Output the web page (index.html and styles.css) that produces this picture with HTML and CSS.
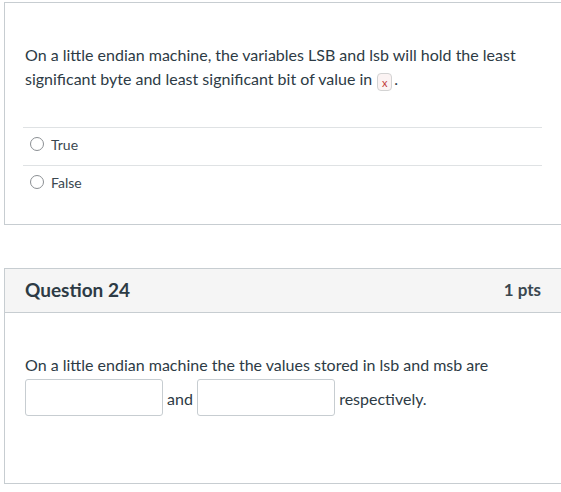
FILE: index.html
```html
<!DOCTYPE html>
<html>
<head>
<meta charset="utf-8">
<link rel="stylesheet" href="styles.css">
</head>
<body>
<div class="card card-first">
  <div class="qbody">
    <p class="qtext">On a little endian machine, the variables LSB and lsb will hold the least significant byte and least significant bit of value in <span class="xbadge">x</span>.</p>
    <div class="answers">
      <label class="answer"><span class="radio"></span><span class="alabel">True</span></label>
      <label class="answer"><span class="radio"></span><span class="alabel">False</span></label>
    </div>
  </div>
</div>
<div class="card card-second">
  <div class="qheader">
    <span class="qtitle">Question 24</span>
    <span class="qpts">1 pts</span>
  </div>
  <div class="qbody qbody-fill">
    <p class="qtext">On a little endian machine the the values stored in lsb and msb are <span class="blank"></span> and <span class="blank"></span> respectively.</p>
  </div>
</div>
</body>
</html>
```
FILE: styles.css
```css
html, body {
  margin: 0;
  padding: 0;
  background: #ffffff;
}
body {
  font-family: Lato, "Open Sans", sans-serif;
  color: #2d3b45;
  overflow: hidden;
}
.card {
  margin-left: 4px;
  border: 1px solid #c7cdd1;
  border-right: none;
}
.card-first {
  margin-top: 2px;
  height: 223px;
  box-sizing: border-box;
}
.card-second {
  margin-top: 43px;
  height: 216px;
  box-sizing: border-box;
}
.qbody {
  padding: 40px 19px 0 18px;
}
.qbody-fill {
  padding-top: 40px;
}
.qtext {
  margin: 0 0 0 2px;
  font-size: 16px;
  line-height: 24px;
}
.xbadge {
  display: inline-block;
  width: 15px;
  height: 18px;
  line-height: 17px;
  box-sizing: border-box;
  border: 1px solid #d3d3d3;
  border-radius: 4px;
  background: #fbf3f3;
  color: #c23b3b;
  font-size: 11px;
  text-align: center;
  vertical-align: -2px;
  margin: 0 2px 0 1px;
}
.answers {
  margin-top: 36px;
}
.answer {
  display: flex;
  align-items: center;
  height: 38px;
  box-sizing: border-box;
  border-top: 1px solid #dfe2e4;
  padding: 0 0 5px 7px;
}
.radio {
  width: 12px;
  height: 12px;
  border: 1px solid #8b8f93;
  border-radius: 50%;
  margin-right: 7px;
}
.alabel {
  font-size: 14px;
  color: #3a4750;
}
.qheader {
  display: flex;
  justify-content: space-between;
  align-items: center;
  height: 44px;
  box-sizing: border-box;
  background: #f5f5f5;
  border-bottom: 1px solid #c7cdd1;
  padding: 0 20px 2px 20px;
}
.qtitle {
  font-size: 19px;
  font-weight: bold;
  color: #2d3b45;
}
.qpts {
  font-size: 17px;
  font-weight: bold;
  color: #3a4750;
}
.blank {
  display: inline-block;
  width: 138px;
  height: 37px;
  box-sizing: border-box;
  border: 1px solid #c7cdd1;
  border-radius: 3px;
  background: #fff;
  vertical-align: -11px;
  margin: 2px 0 0;
}
```
